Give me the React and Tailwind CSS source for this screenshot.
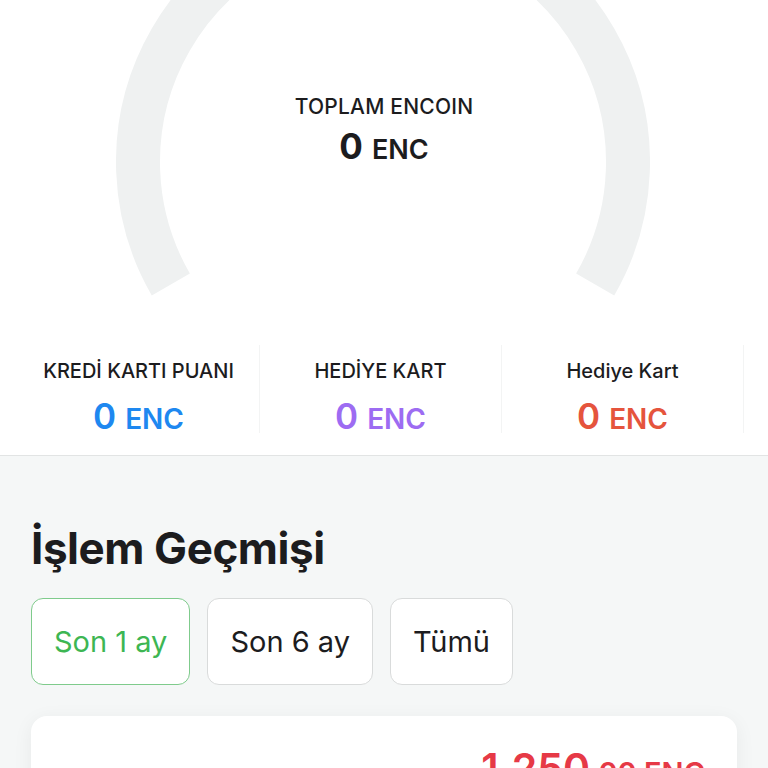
import React from 'react';

const stats = [
  { label: 'KREDİ KARTI PUANI', value: '0', color: 'text-[#1e88f0]' },
  { label: 'HEDİYE KART', value: '0', color: 'text-[#9d6cf2]' },
  { label: 'Hediye Kart', value: '0', color: 'text-[#e5543d]' },
];

const ranges = ['Son 1 ay', 'Son 6 ay', 'Tümü'];

function Gauge() {
  // 240 degree arc, open at the bottom
  const r = 245;
  const c = 267;
  const start = (210 * Math.PI) / 180;
  const end = (-30 * Math.PI) / 180;
  const x1 = c + r * Math.cos(start);
  const y1 = c - r * Math.sin(start);
  const x2 = c + r * Math.cos(end);
  const y2 = c - r * Math.sin(end);
  return (
    <svg width="534" height="534" viewBox="0 0 534 534" className="absolute left-[116px] top-[-105px]">
      <path
        d={`M ${x1} ${y1} A ${r} ${r} 0 1 1 ${x2} ${y2}`}
        fill="none"
        stroke="#eff1f1"
        strokeWidth="44"
      />
    </svg>
  );
}

export default function App() {
  const [range, setRange] = React.useState('Son 1 ay');

  return (
    <div className="w-full h-[768px] overflow-hidden bg-[#f5f7f7] font-['Inter',sans-serif] text-[#1c1c1e]">
      <section className="bg-white border-b border-[#e2e4e4]">
        <div className="relative h-[345px]">
          <Gauge />
          <div className="relative flex flex-col items-center pt-[93px]">
            <p className="text-[21px] font-medium leading-[28px] tracking-[0.01em]">TOPLAM ENCOIN</p>
            <p className="mt-[5px] flex items-baseline gap-[9px] font-bold leading-[40px]">
              <span className="text-[35px]">0</span>
              <span className="text-[27px] font-semibold">ENC</span>
            </p>
          </div>
        </div>

        <div className="flex pl-[18px] h-[110px] items-start">
          {stats.map((s) => (
            <div
              key={s.label}
              className="w-[242px] shrink-0 flex flex-col items-center pt-[12px] border-r border-[#f3f4f4] h-[88px]"
            >
              <p className="text-[20px] font-medium leading-[28px]">{s.label}</p>
              <p className={`mt-[12px] flex items-baseline gap-[9px] ${s.color}`}>
                <span className="text-[35px] font-semibold leading-[38px]">{s.value}</span>
                <span className="text-[28px] font-semibold">ENC</span>
              </p>
            </div>
          ))}
        </div>
      </section>

      <section className="px-[31px] pt-[64px]">
        <h2 className="text-[44px] font-bold leading-[56px] tracking-[-0.01em]">İşlem Geçmişi</h2>

        <div className="mt-[22px] flex gap-[17px]">
          {ranges.map((r) => {
            const active = r === range;
            return (
              <button
                key={r}
                onClick={() => setRange(r)}
                className={`h-[87px] px-[22px] rounded-[12px] bg-white border text-[29px] ${
                  active ? 'border-[#7fcb8c] text-[#3db653]' : 'border-[#d9dbdb] text-[#1c1c1e]'
                }`}
              >
                {r}
              </button>
            );
          })}
        </div>

        <div className="mt-[31px] bg-white rounded-[16px] shadow-[0_4px_20px_rgba(0,0,0,0.06)] h-[200px] px-[32px] pt-[22px]">
          <p className="flex justify-end items-baseline text-[#e63946] font-semibold">
            <span className="text-[41px]">1.250</span>
            <span className="text-[29px]">,00 ENC</span>
          </p>
        </div>
      </section>
    </div>
  );
}
